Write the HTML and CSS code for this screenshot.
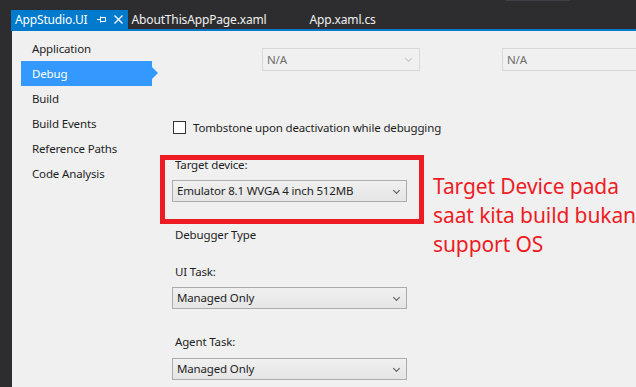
FILE: index.html
```html
<!DOCTYPE html>
<html lang="en">
<head>
    <meta charset="UTF-8">
    <title>AppStudio.UI - Debug</title>
    <link rel="stylesheet" href="styles.css">
</head>
<body>
    <div class="topbar"><span class="top-slot"></span></div>
    <div class="main">
        <div class="side-strip"></div>
        <div class="doc">
            <div class="tabs">
                <div class="tab active">
                    <span class="tab-title">AppStudio.UI</span>
                    <svg class="tab-icon" width="9" height="7" viewBox="0 0 9 7">
                        <path d="M0 3.5H3M3.5 0.5V6.5M3.5 1.5H8.5V5.5H3.5" fill="none" stroke="#fff" stroke-width="1"/>
                    </svg>
                    <svg class="tab-icon close" width="9" height="9" viewBox="0 0 9 9">
                        <path d="M0.5 0.5L8.5 8.5M8.5 0.5L0.5 8.5" stroke="#fff" stroke-width="1.3"/>
                    </svg>
                </div>
                <div class="tab">AboutThisAppPage.xaml</div>
                <div class="tab wide">App.xaml.cs</div>
            </div>
            <div class="panel">
                <ul class="nav">
                    <li>Application</li>
                    <li class="selected">Debug</li>
                    <li>Build</li>
                    <li>Build Events</li>
                    <li>Reference Paths</li>
                    <li>Code Analysis</li>
                </ul>
                <div class="content">
                    <div class="top-fields">
                        <div class="select disabled first">N/A<span class="chev"></span></div>
                        <div class="select disabled second">N/A</div>
                    </div>
                    <label class="check-row">
                        <span class="checkbox"></span>
                        Tombstone upon deactivation while debugging
                    </label>
                    <div class="row">
                        <div class="form">
                            <div class="target">
                                <div class="field-label">Target device:</div>
                                <div class="select">Emulator 8.1 WVGA 4 inch 512MB<span class="chev"></span></div>
                            </div>
                            <div class="section-title">Debugger Type</div>
                            <div class="field-label spaced">UI Task:</div>
                            <div class="select">Managed Only<span class="chev"></span></div>
                            <div class="field-label spaced agent">Agent Task:</div>
                            <div class="select">Managed Only<span class="chev"></span></div>
                        </div>
                        <p class="note">Target Device pada saat kita build bukan support OS</p>
                    </div>
                </div>
            </div>
        </div>
    </div>
</body>
</html>
```

FILE: styles.css
```css
body {
    margin: 0;
    width: 636px;
    height: 387px;
    overflow: hidden;
    background-color: #2d2d30;
    font-family: "Segoe UI", "Noto Sans", sans-serif;
    font-size: 11.5px;
    letter-spacing: -0.15px;
    color: #1e1e1e;
}
.topbar {
    height: 10px;
}
.top-slot {
    display: block;
    margin-left: 506px;
    width: 64px;
    height: 1px;
    background-color: #3f3f46;
}
.main {
    display: flex;
    height: 377px;
}
.side-strip {
    width: 11px;
    flex: none;
}
.doc {
    flex: 1;
    display: flex;
    flex-direction: column;
}
.tabs {
    display: flex;
    height: 19px;
    border-bottom: 2px solid #007acc;
    color: #f1f1f1;
    font-size: 12px;
}
.tab {
    display: flex;
    align-items: center;
    padding: 0 4px;
    width: 170px;
}
.tab.wide {
    width: auto;
}
.tab.active {
    width: auto;
    background-color: #007acc;
    color: #fff;
    padding: 0 5px 0 4px;
}
.tab-title {
    margin-right: 9px;
}
.tab-icon {
    margin-right: 8px;
}
.tab-icon.close {
    margin-right: 0;
}
.panel {
    flex: 1;
    display: flex;
    background-color: #f0f0f0;
    margin-left: 1px;
}
.nav {
    list-style: none;
    margin: 0;
    padding: 5px 0 0 9px;
    width: 139px;
    flex: none;
}
.nav li {
    height: 25px;
    line-height: 25px;
    padding-left: 11px;
    width: 120px;
    position: relative;
}
.nav li.selected {
    background-color: #3399ff;
    color: #fff;
}
.nav li.selected::after {
    content: "";
    position: absolute;
    right: -6px;
    top: 6px;
    border-left: 6px solid #3399ff;
    border-top: 6px solid transparent;
    border-bottom: 6px solid transparent;
}
.content {
    flex: 1;
    padding-top: 17px;
}
.top-fields {
    display: flex;
    height: 23px;
}
.select {
    position: relative;
    width: 229px;
    height: 20px;
    line-height: 20px;
    padding-left: 4px;
    border: 1px solid #acacac;
    background: linear-gradient(#f0f0f0, #e5e5e5);
    margin-left: 12px;
}
.select.disabled {
    background: #f0f0f0;
    border-color: #d9d9d9;
    color: #6d6d6d;
    height: 21px;
    line-height: 21px;
}
.select.first {
    width: 152px;
    margin-left: 102px;
}
.select.second {
    width: 140px;
    margin-left: 82px;
    border-right: none;
}
.chev {
    position: absolute;
    right: 7px;
    top: 7px;
    width: 4px;
    height: 4px;
    border-right: 1.5px solid #555;
    border-bottom: 1.5px solid #555;
    transform: rotate(45deg);
}
.select.disabled .chev {
    border-color: #c4c4c4;
    right: 8px;
}
.check-row {
    display: flex;
    align-items: center;
    margin: 50px 0 0 13px;
    height: 13px;
}
.checkbox {
    width: 11px;
    height: 11px;
    border: 1px solid #333;
    background-color: #fff;
    margin-right: 7px;
}
.row {
    display: flex;
}
.form {
    width: 264px;
    flex: none;
}
.target {
    position: relative;
    margin-top: 21px;
    height: 69px;
}
.target::after {
    content: "";
    position: absolute;
    inset: 0;
    border: 5px solid #ed1c24;
}
.target .field-label {
    padding-top: 2px;
    height: 21px;
    line-height: 16px;
}
.field-label {
    padding-left: 15px;
}
.target .select {
    margin-top: 2px;
}
.section-title {
    padding-left: 15px;
    margin-top: 3px;
    line-height: 16px;
}
.field-label.spaced {
    margin-top: 21px;
    line-height: 16px;
    height: 23px;
}
.field-label.agent {
    margin-top: 25px;
    height: 24px;
}
.note {
    margin: 38px 0 0 9px;
    color: #ed1c24;
    font-size: 21px;
    letter-spacing: -0.1px;
    line-height: 29px;
    width: 218px;
    flex: none;
}
```
